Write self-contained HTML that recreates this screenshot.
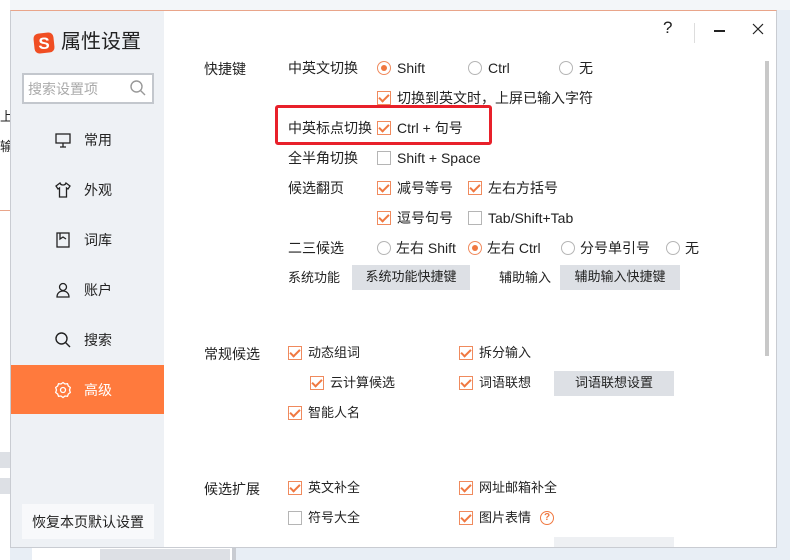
<!DOCTYPE html><html><head><meta charset="utf-8"><style>
*{margin:0;padding:0;box-sizing:border-box}
body{width:790px;height:560px;overflow:hidden;background:#e8eef5;font-family:"Liberation Sans","Noto Sans CJK SC",sans-serif;font-size:14px;color:#222;position:relative}
.a{position:absolute;white-space:nowrap;line-height:18px}
.win{position:absolute;left:10px;top:10px;width:767px;height:538px;background:#fff;border:1px solid #c9ccd2;border-top:1px solid #e9a58a;overflow:hidden}
.side{position:absolute;left:0;top:0;width:153px;height:538px;background:#eef1f5}
.cb{position:absolute;width:14px;height:14px;border:1px solid #f08a5d;background:#fff}
.cb.on::after{content:"";position:absolute;left:3px;top:0px;width:4px;height:8px;border:solid #f07840;border-width:0 2px 2px 0;transform:rotate(45deg)}
.cb.off{border-color:#b5b5b5}
.rd{position:absolute;width:14px;height:14px;border:1px solid #b5b5b5;border-radius:50%;background:#fff}
.rd.on{border-color:#f08a5d}
.rd.on::after{content:"";position:absolute;left:3px;top:3px;width:6px;height:6px;border-radius:50%;background:#f07840}
.btn{position:absolute;background:#dde0e5;text-align:center;line-height:24px;height:25px;font-size:13px}
.nav{position:absolute;left:0;width:153px;height:49px}
.nav span{position:absolute;left:73px;top:15px;font-size:14px}
.nav svg{position:absolute;left:43px;top:16px}
</style></head><body>
<div style="position:absolute;left:0;top:0;width:790px;height:10px;background:#f3f6f9"></div>
<div style="position:absolute;left:0;top:0;width:10px;height:560px;background:#fff"></div>
<div class="a" style="left:0;top:108px;font-size:13px">上</div>
<div class="a" style="left:0;top:138px;font-size:13px">输</div>
<div style="position:absolute;left:0;top:210px;width:10px;height:1px;background:#e9a58a"></div>
<div style="position:absolute;left:0;top:452px;width:10px;height:16px;background:#dde0e5"></div>
<div style="position:absolute;left:0;top:478px;width:10px;height:16px;background:#dde0e5"></div>
<div style="position:absolute;left:32px;top:548px;width:200px;height:12px;background:#fff"></div>
<div style="position:absolute;left:100px;top:549px;width:130px;height:11px;background:#dde0e5"></div>
<div style="position:absolute;left:232px;top:548px;width:4px;height:12px;background:#c9ccd2"></div>
<div class="win">
<div class="side">
 <svg style="position:absolute;left:22px;top:21px" width="22" height="22" viewBox="0 0 22 22"><rect x="1" y="1" width="20" height="20" rx="5" fill="#f04e23" transform="rotate(-6 11 11)"/><text x="11" y="17" text-anchor="middle" font-size="17" font-weight="bold" fill="#fff" font-family="Liberation Sans">S</text></svg>
 <div class="a" style="left:50px;top:19px;font-size:20px;line-height:24px">属性设置</div>
 <div style="position:absolute;left:11px;top:62px;width:132px;height:31px;border:2px solid #c3c7cd;background:#fff"></div>
 <div class="a" style="left:17px;top:69px;color:#aaa;font-size:14px">搜索设置项</div>
 <svg style="position:absolute;left:118px;top:68px" width="18" height="18" viewBox="0 0 18 18" fill="none" stroke="#999" stroke-width="1.4"><circle cx="7.5" cy="7.5" r="5.5"/><path d="M11.5 11.5 16 16"/></svg>
 <div class="nav" style="top:104px"><svg width="18" height="18" viewBox="0 0 18 18" fill="none" stroke="#222" stroke-width="1.3"><rect x="2" y="3" width="14" height="9"/><path d="M9 12v4M6 16h6"/></svg><span>常用</span></div>
 <div class="nav" style="top:154px"><svg width="18" height="18" viewBox="0 0 18 18" fill="none" stroke="#222" stroke-width="1.3"><path d="M6 2 2 5l2 3 1.5-1V16h7V7l1.5 1 2-3-4-3c-.5 1.5-1.5 2-3 2S6.5 3.5 6 2z"/></svg><span>外观</span></div>
 <div class="nav" style="top:204px"><svg width="18" height="18" viewBox="0 0 18 18" fill="none" stroke="#222" stroke-width="1.3"><rect x="3" y="2" width="12" height="14"/><path d="M6 2v6l3-2 3 2"/></svg><span>词库</span></div>
 <div class="nav" style="top:254px"><svg width="18" height="18" viewBox="0 0 18 18" fill="none" stroke="#222" stroke-width="1.3"><circle cx="9" cy="6" r="3.5"/><path d="M3 16c0-3.5 2.5-6 6-6s6 2.5 6 6z"/></svg><span>账户</span></div>
 <div class="nav" style="top:304px"><svg width="18" height="18" viewBox="0 0 18 18" fill="none" stroke="#222" stroke-width="1.4"><circle cx="7.5" cy="7.5" r="5.5"/><path d="M11.5 11.5 16 16"/></svg><span>搜索</span></div>
 <div class="nav" style="top:354px;background:#ff7a3d;color:#fff"><svg width="18" height="18" viewBox="0 0 18 18" fill="none" stroke="#fff" stroke-width="1.3"><path d="M9 1.5l2 1.5 2.5-.3.8 2.3 2 1.5-.8 2.5.8 2.5-2 1.5-.8 2.3-2.5-.3L9 16.5 7 15l-2.5.3-.8-2.3-2-1.5.8-2.5-.8-2.5 2-1.5.8-2.3L7 3z"/><circle cx="9" cy="9" r="2.5"/></svg><span style="color:#fff">高级</span></div>
 <div style="position:absolute;left:11px;top:493px;width:132px;height:35px;background:#f8f9fb"></div>
 <div class="a" style="left:21px;top:502px">恢复本页默认设置</div>
</div>
<div class="a" style="left:652px;top:7px;font-size:17px;line-height:20px">?</div>
<div style="position:absolute;left:683px;top:12px;width:1px;height:20px;background:#ddd"></div>
<div style="position:absolute;left:703px;top:19px;width:11px;height:1.5px;background:#222"></div>
<svg style="position:absolute;left:741px;top:12px" width="12" height="12" viewBox="0 0 12 12" stroke="#222" stroke-width="1.2"><path d="M1 1l10 10M11 1 1 11"/></svg>
<div style="position:absolute;left:754px;top:50px;width:4px;height:295px;background:#c8c8c8"></div>
<div style="position:absolute;left:264px;top:94px;width:217px;height:40px;border:3px solid #e8202a;border-radius:3px"></div>
</div>
<div class="a" style="left:204px;top:60px">快捷键</div>
<div class="a" style="left:288px;top:59px">中英文切换</div>
<div class="rd on" style="left:377px;top:61px"></div><div class="a" style="left:397px;top:59px">Shift</div>
<div class="rd" style="left:468px;top:61px"></div><div class="a" style="left:488px;top:59px">Ctrl</div>
<div class="rd" style="left:559px;top:61px"></div><div class="a" style="left:579px;top:59px">无</div>
<div class="cb on" style="left:377px;top:91px"></div><div class="a" style="left:397px;top:89px">切换到英文时，上屏已输入字符</div>
<div class="a" style="left:288px;top:119px">中英标点切换</div>
<div class="cb on" style="left:377px;top:121px"></div><div class="a" style="left:397px;top:119px">Ctrl + 句号</div>
<div class="a" style="left:288px;top:149px">全半角切换</div>
<div class="cb off" style="left:377px;top:151px"></div><div class="a" style="left:397px;top:149px">Shift + Space</div>
<div class="a" style="left:288px;top:179px">候选翻页</div>
<div class="cb on" style="left:377px;top:181px"></div><div class="a" style="left:397px;top:179px">减号等号</div>
<div class="cb on" style="left:468px;top:181px"></div><div class="a" style="left:488px;top:179px">左右方括号</div>
<div class="cb on" style="left:377px;top:211px"></div><div class="a" style="left:397px;top:209px">逗号句号</div>
<div class="cb off" style="left:468px;top:211px"></div><div class="a" style="left:488px;top:209px">Tab/Shift+Tab</div>
<div class="a" style="left:288px;top:239px">二三候选</div>
<div class="rd" style="left:377px;top:241px"></div><div class="a" style="left:396px;top:239px">左右 Shift</div>
<div class="rd on" style="left:468px;top:241px"></div><div class="a" style="left:487px;top:239px">左右 Ctrl</div>
<div class="rd" style="left:561px;top:241px"></div><div class="a" style="left:580px;top:239px">分号单引号</div>
<div class="rd" style="left:666px;top:241px"></div><div class="a" style="left:685px;top:239px">无</div>
<div class="a" style="left:288px;top:269px;font-size:13px">系统功能</div>
<div class="btn" style="left:352px;top:265px;width:118px">系统功能快捷键</div>
<div class="a" style="left:499px;top:269px;font-size:13px">辅助输入</div>
<div class="btn" style="left:560px;top:265px;width:120px">辅助输入快捷键</div>
<div class="a" style="left:204px;top:345px">常规候选</div>
<div class="cb on" style="left:288px;top:346px"></div><div class="a" style="left:308px;top:344px;font-size:13px">动态组词</div>
<div class="cb on" style="left:459px;top:346px"></div><div class="a" style="left:479px;top:344px;font-size:13px">拆分输入</div>
<div class="cb on" style="left:310px;top:376px"></div><div class="a" style="left:330px;top:374px;font-size:13px">云计算候选</div>
<div class="cb on" style="left:459px;top:376px"></div><div class="a" style="left:479px;top:374px;font-size:13px">词语联想</div>
<div class="btn" style="left:554px;top:371px;width:120px;line-height:24px">词语联想设置</div>
<div class="cb on" style="left:288px;top:406px"></div><div class="a" style="left:308px;top:404px;font-size:13px">智能人名</div>
<div class="a" style="left:204px;top:480px">候选扩展</div>
<div class="cb on" style="left:288px;top:481px"></div><div class="a" style="left:308px;top:479px;font-size:13px">英文补全</div>
<div class="cb on" style="left:459px;top:481px"></div><div class="a" style="left:479px;top:479px;font-size:13px">网址邮箱补全</div>
<div class="cb off" style="left:288px;top:511px"></div><div class="a" style="left:308px;top:509px;font-size:13px">符号大全</div>
<div class="cb on" style="left:459px;top:511px"></div><div class="a" style="left:479px;top:509px;font-size:13px">图片表情</div>
<div style="position:absolute;left:540px;top:511px;width:14px;height:14px;border:1.5px solid #f07840;border-radius:50%;color:#f07840;font-size:10px;line-height:11px;text-align:center;font-weight:bold">?</div>
<div style="position:absolute;left:554px;top:537px;width:120px;height:10px;background:#eef0f3"></div>
</body></html>
